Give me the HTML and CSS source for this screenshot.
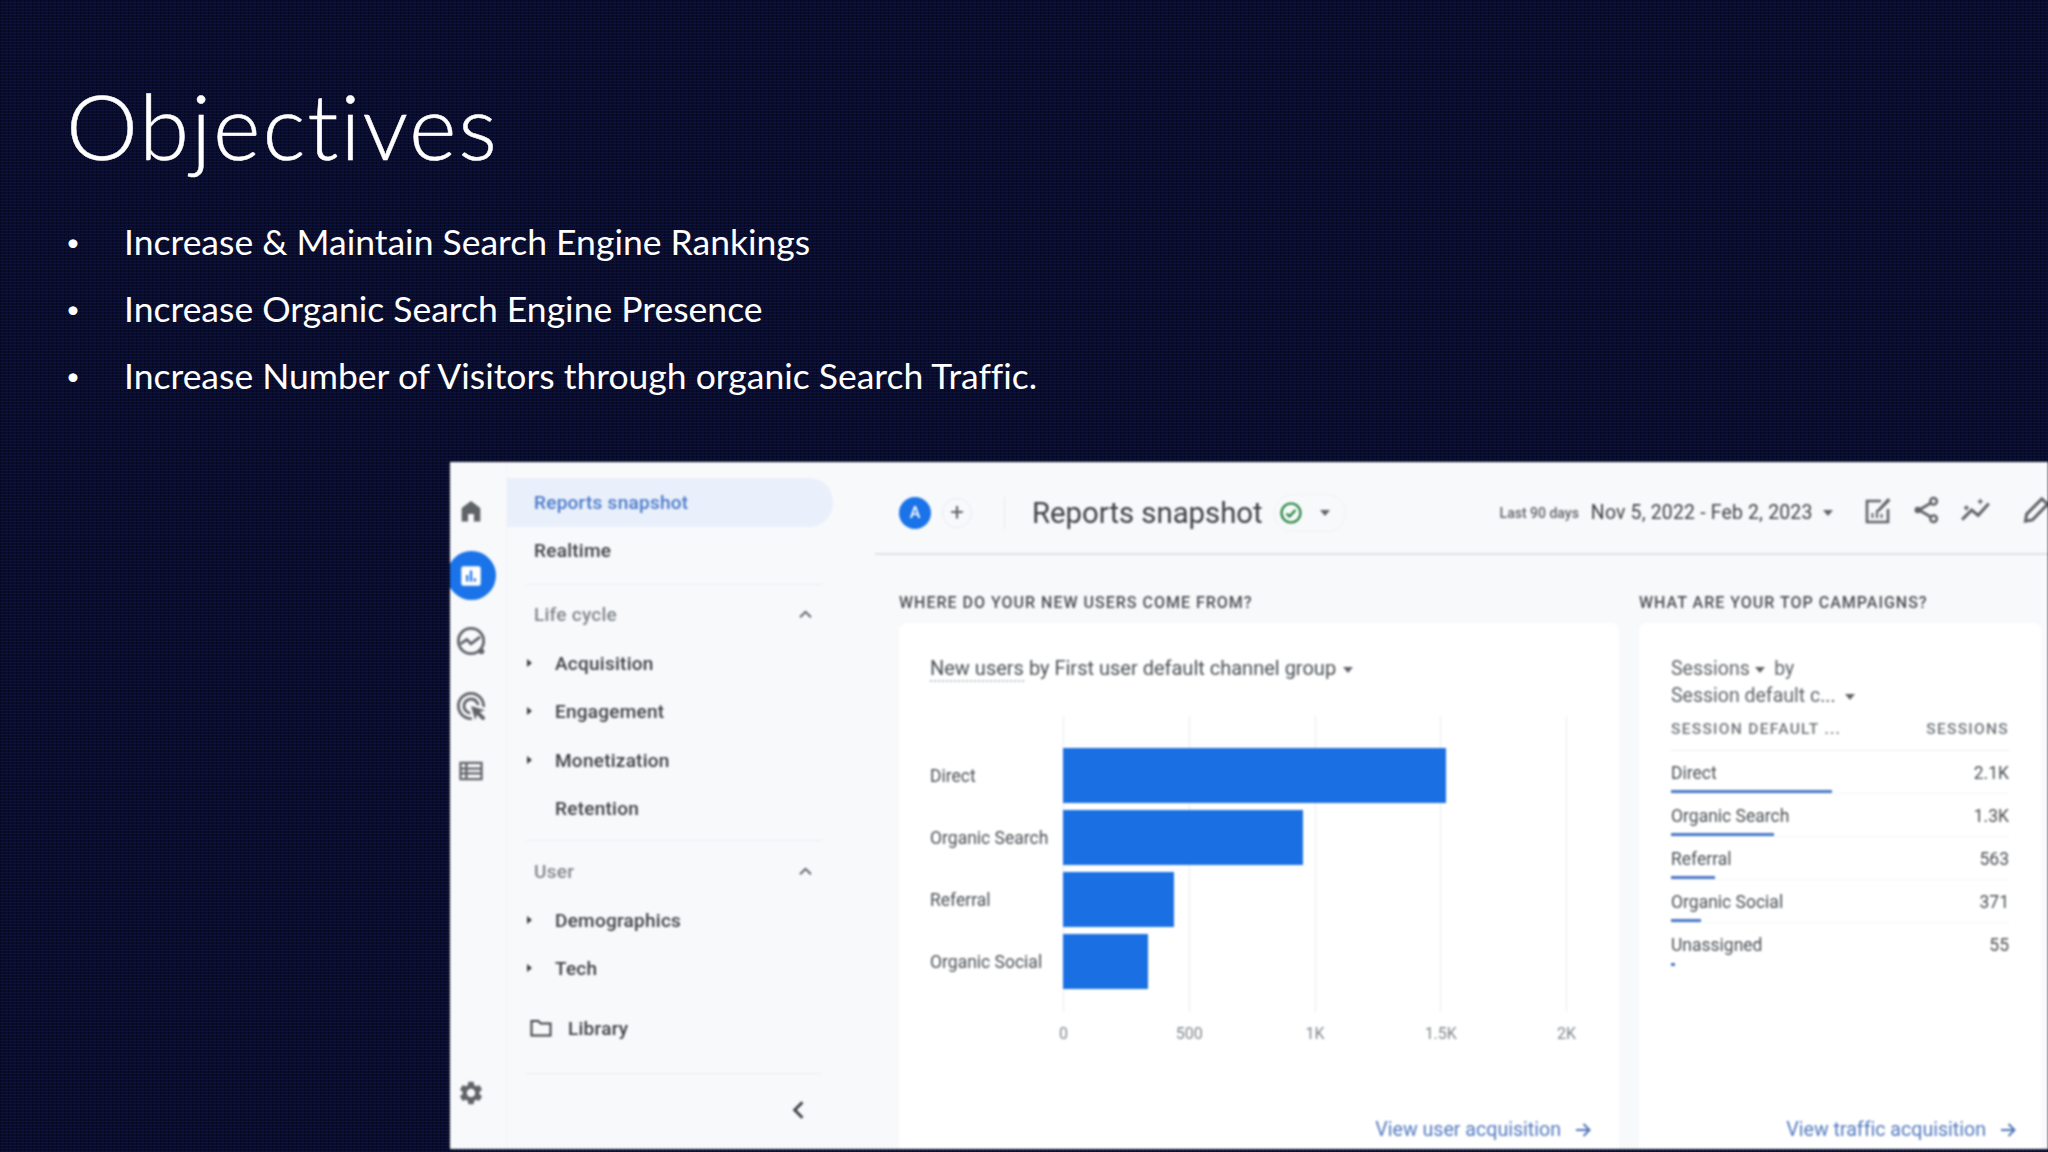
FILE: index.html
```html
<!DOCTYPE html>
<html lang="en">
<head>
  <meta charset="UTF-8">
  <title>Objectives</title>
  <link rel="stylesheet" href="styles.css">
</head>
<body>
<div class="slide">
  <h1 class="slide-title">Objectives</h1>
  <ul class="points">
    <li>Increase &amp; Maintain Search Engine Rankings</li>
    <li>Increase Organic Search Engine Presence</li>
    <li>Increase Number of Visitors through organic Search Traffic.</li>
  </ul>

  <div class="shot">
    <div class="rail">
      <svg class="rail-icon" viewBox="0 0 24 24"><path d="M4 21V10.500C4 9.800 4.300 9.200 4.900 8.800L12 3.500l7.100 5.300c.6.4.9 1 .9 1.700V21h-5.500v-6.500h-5V21z"/></svg>
      <div class="rail-active">
        <svg viewBox="0 0 24 24"><rect x="3" y="3" width="18" height="18" rx="2" fill="#fff"/><path d="M7.500 11h2v6h-2zM11 7h2v10h-2zM14.500 14h2v3h-2z" fill="#1a73e8"/></svg>
      </div>
      <svg class="rail-icon" viewBox="2 2 20 20"><circle cx="12" cy="12" r="9" fill="none" stroke="#5f6368" stroke-width="2"/><path d="M4.500 14l4.500-3 3 3 6.500-5" fill="none" stroke="#5f6368" stroke-width="2"/><circle cx="19.500" cy="19.500" r="2" fill="#5f6368"/></svg>
      <svg class="rail-icon" viewBox="2 2 20 20"><path d="M11.710 17.990C8.530 17.840 6 15.220 6 12c0-3.310 2.690-6 6-6 3.220 0 5.840 2.530 5.990 5.710l-2.100-.63C15.480 9.310 13.890 8 12 8c-2.210 0-4 1.790-4 4 0 1.890 1.310 3.480 3.080 3.890l.63 2.100zM22 12c0 .3-.01.6-.04.9l-1.970-.59c.01-.1.01-.21.01-.31 0-4.420-3.580-8-8-8s-8 3.580-8 8 3.580 8 8 8c.1 0 .21 0 .31-.01l.59 1.970c-.3.03-.6.04-.9.04-5.520 0-10-4.480-10-10S6.480 2 12 2s10 4.480 10 10zm-3.770 4.260L22 15l-10-3 3 10 1.260-3.770 4.270 4.270 1.980-1.980-4.280-4.260z"/></svg>
      <svg class="rail-icon" viewBox="0 0 24 24"><path d="M2 4h20v16H2zM4 6v3h3V6zm5 0v3h11V6zm-5 5v2h3v-2zm5 0v2h11v-2zm-5 4v3h3v-3zm5 0v3h11v-3z" fill-rule="evenodd"/></svg>
      <svg class="rail-icon rail-gear" viewBox="0 0 24 24"><path d="M19.140 12.940c.04-.3.06-.61.06-.94 0-.32-.02-.64-.07-.94l2.030-1.580c.18-.14.23-.41.12-.61l-1.920-3.320c-.12-.22-.37-.29-.59-.22l-2.390.96c-.5-.38-1.030-.7-1.620-.94l-.36-2.540c-.04-.24-.24-.41-.48-.41h-3.840c-.24 0-.43.17-.47.41l-.36 2.540c-.59.24-1.130.57-1.620.94l-2.390-.96c-.22-.08-.47 0-.59.22L2.740 8.870c-.12.21-.08.47.12.61l2.030 1.580c-.05.3-.09.63-.09.94s.02.64.07.94l-2.030 1.580c-.18.14-.23.41-.12.61l1.920 3.320c.12.22.37.29.59.22l2.390-.96c.5.38 1.030.7 1.620.94l.36 2.540c.05.24.24.41.48.41h3.840c.24 0 .44-.17.47-.41l.36-2.540c.59-.24 1.130-.56 1.620-.94l2.390.96c.22.08.47 0 .59-.22l1.920-3.320c.12-.22.07-.47-.12-.61l-2.010-1.580zM12 15.600c-1.980 0-3.600-1.620-3.600-3.600s1.620-3.600 3.600-3.600 3.600 1.620 3.600 3.600-1.620 3.600-3.600 3.600z"/></svg>
    </div>

    <nav class="nav">
      <div class="nav-row nav-current">Reports snapshot</div>
      <div class="nav-row">Realtime</div>
      <div class="nav-line nav-line-a"></div>
      <div class="nav-row nav-head">Life cycle
        <svg class="chev" viewBox="0 0 12 8"><path d="M1 6.500l5-5 5 5" fill="none" stroke="#5f6368" stroke-width="1.800"/></svg>
      </div>
      <div class="nav-row nav-sub"><i class="tri"></i>Acquisition</div>
      <div class="nav-row nav-sub"><i class="tri"></i>Engagement</div>
      <div class="nav-row nav-sub"><i class="tri"></i>Monetization</div>
      <div class="nav-row nav-sub">Retention</div>
      <div class="nav-line nav-line-b"></div>
      <div class="nav-row nav-head">User
        <svg class="chev" viewBox="0 0 12 8"><path d="M1 6.500l5-5 5 5" fill="none" stroke="#5f6368" stroke-width="1.800"/></svg>
      </div>
      <div class="nav-row nav-sub"><i class="tri"></i>Demographics</div>
      <div class="nav-row nav-sub"><i class="tri"></i>Tech</div>
      <div class="nav-row nav-lib">
        <svg class="folder" viewBox="0 0 22 18"><path d="M1.500 2h7l2 2.500h10v12h-19z" fill="none" stroke="#3c4043" stroke-width="2"/></svg>
        Library
      </div>
      <div class="nav-line nav-line-c"></div>
      <svg class="back" viewBox="0 0 12 18"><path d="M10 2L3 9l7 7" fill="none" stroke="#3c4043" stroke-width="2.600"/></svg>
    </nav>

    <div class="main">
      <header class="top">
        <span class="avatar">A</span>
        <span class="plus">+</span>
        <span class="top-sep"></span>
        <span class="top-title">Reports snapshot</span>
        <span class="status">
          <svg viewBox="0 0 24 24"><circle cx="12" cy="12" r="9.500" fill="none" stroke="#188038" stroke-width="2.200"/><path d="M7.500 12.500l3 3 6-6.500" fill="none" stroke="#188038" stroke-width="2.200"/></svg>
          <i class="caret"></i>
        </span>
        <span class="range-note">Last 90 days</span>
        <span class="range">Nov 5, 2022 - Feb 2, 2023</span>
        <i class="caret caret-range"></i>
        <svg class="tool tool-first" viewBox="0 0 28 28"><path d="M17 5H3v21h21V13" fill="none" stroke="#5f6368" stroke-width="2.600"/><path d="M8.500 22v-5M13 22v-8M17.500 22v-4" stroke="#5f6368" stroke-width="2"/><path d="M13 14L24 2l2.500 2.500L15 16z" fill="#5f6368"/></svg>
        <svg class="tool" viewBox="0 0 24 24"><path d="M18 5L6 12l12 7" fill="none" stroke="#5f6368" stroke-width="2.400"/><circle cx="18.500" cy="4.500" r="2.800" fill="#f8f9fb" stroke="#5f6368" stroke-width="2.200"/><circle cx="5" cy="12" r="2.800" fill="#5f6368"/><circle cx="18.500" cy="19.500" r="2.800" fill="#f8f9fb" stroke="#5f6368" stroke-width="2.200"/></svg>
        <svg class="tool tool-wide" viewBox="0 0 30 24"><path d="M2 21l9-9 6 5 10-11" fill="none" stroke="#5f6368" stroke-width="2.800"/><path d="M5 9l1-2 1 2 2 1-2 1-1 2-1-2-2-1zM18 3l1-2 1 2 2 1-2 1-1 2-1-2-2-1z" fill="#5f6368"/></svg>
        <svg class="tool tool-pen" viewBox="0 0 24 24"><path d="M3 21.500l1-6L17 2.500l5 4.500L9 20.500z" fill="none" stroke="#5f6368" stroke-width="2.600"/></svg>
      </header>

      <div class="cols">
        <section class="col col-a">
          <h2 class="col-title">WHERE DO YOUR NEW USERS COME FROM?</h2>
          <div class="card">
            <div class="card-title"><span class="dotted">New users</span> by First user default channel group <i class="caret"></i></div>
            <div class="chart">
              <div class="grid"><i></i><i></i><i></i><i></i><i></i></div>
              <div class="bar-row"><span>Direct</span><b class="bar" style="width:383px"></b></div>
              <div class="bar-row"><span>Organic Search</span><b class="bar" style="width:240px"></b></div>
              <div class="bar-row"><span>Referral</span><b class="bar" style="width:111px"></b></div>
              <div class="bar-row"><span>Organic Social</span><b class="bar" style="width:85px"></b></div>
            </div>
            <div class="axis"><span>0</span><span>500</span><span>1K</span><span>1.5K</span><span>2K</span></div>
            <a class="more">View user acquisition
              <svg viewBox="0 0 20 20"><path d="M3 10h13M10.500 4l6 6-6 6" fill="none" stroke="#4f74b8" stroke-width="2"/></svg>
            </a>
          </div>
        </section>

        <section class="col col-b">
          <h2 class="col-title">WHAT ARE YOUR TOP CAMPAIGNS?</h2>
          <div class="card card-side">
            <div class="side-title">Sessions <i class="caret"></i>&nbsp; by</div>
            <div class="side-title">Session default c... &nbsp;<i class="caret"></i></div>
            <div class="thead"><span>SESSION DEFAULT ...</span><span>SESSIONS</span></div>
            <div class="trow"><div class="tcell"><span>Direct</span><span>2.1K</span></div><b class="meter" style="width:161px"></b></div>
            <div class="trow"><div class="tcell"><span>Organic Search</span><span>1.3K</span></div><b class="meter" style="width:103px"></b></div>
            <div class="trow"><div class="tcell"><span>Referral</span><span>563</span></div><b class="meter" style="width:44px"></b></div>
            <div class="trow"><div class="tcell"><span>Organic Social</span><span>371</span></div><b class="meter" style="width:30px"></b></div>
            <div class="trow trow-last"><div class="tcell"><span>Unassigned</span><span>55</span></div><b class="meter" style="width:4px"></b></div>
            <a class="more">View traffic acquisition
              <svg viewBox="0 0 20 20"><path d="M3 10h13M10.500 4l6 6-6 6" fill="none" stroke="#4f74b8" stroke-width="2"/></svg>
            </a>
          </div>
        </section>
      </div>
    </div>
  </div>
</div>
</body>
</html>
```

FILE: styles.css
```css
* {
  margin: 0;
  padding: 0;
  box-sizing: border-box;
}

body {
  background: #050a2b;
  font-family: Roboto, "Liberation Sans", sans-serif;
}

.slide {
  width: 2048px;
  height: 1152px;
  overflow: hidden;
  display: flex;
  flex-direction: column;
  color: #fff;
  background-color: #080c2e;
  background-image:
    repeating-linear-gradient(0deg, rgba(34, 44, 110, .22) 0 1px, transparent 1px 3px),
    repeating-linear-gradient(90deg, rgba(0, 0, 12, .4) 0 1px, transparent 1px 4px);
  font-variant-ligatures: none;
}

.slide-title {
  font-family: Lato, "Open Sans", sans-serif;
  font-weight: 300;
  font-size: 91px;
  letter-spacing: 1.900px;
  -webkit-text-stroke: .5px #fff;
  line-height: 100px;
  padding: 75px 0 0 66px;
}

.points {
  list-style: none;
  font-family: Lato, "Open Sans", sans-serif;
  font-size: 35.500px;
  line-height: 67px;
  padding: 33px 0 0 66px;
}

.points li {
  display: flex;
}

.points li::before {
  content: "•";
  width: 58px;
  font-size: 24px;
}

/* the pasted analytics screenshot */
.shot {
  margin: auto 0 3px 450px;
  height: 687px;
  display: flex;
  color: #3c4043;
  background: #f8f9fb;
  overflow: hidden;
  filter: blur(.8px);
}

.rail {
  width: 57px;
  flex: none;
  display: flex;
  flex-direction: column;
  align-items: center;
  padding: 35px 14px 0 0;
  border-right: 1px solid #f1f3f4;
}

.rail-icon {
  width: 28px;
  height: 28px;
  flex: none;
  fill: #5f6368;
}

.rail-active {
  width: 49px;
  height: 49px;
  flex: none;
  margin: 26px 0 27px;
  border-radius: 50%;
  background: #1a73e8;
  display: flex;
  align-items: center;
  justify-content: center;
}

.rail-active svg {
  width: 26px;
  height: 26px;
}

.rail-icon + .rail-icon {
  margin-top: 37px;
}

.rail-active + .rail-icon {
  margin-top: 0;
}

.rail .rail-gear {
  margin-top: auto;
  margin-bottom: 42px;
}

.nav {
  width: 368px;
  flex: none;
  padding-top: 16px;
  font-size: 19px;
  letter-spacing: .25px;
  font-weight: 500;
}

.nav-row {
  height: 48.6px;
  width: 326px;
  padding-left: 27px;
  display: flex;
  align-items: center;
  position: relative;
}

.nav-current {
  color: #4a78c8;
  background: #e9f0fb;
  border-radius: 0 24px 24px 0;
}

.nav-head {
  color: #80868b;
}

.nav-sub {
  padding-left: 48px;
}

.nav-lib {
  margin-top: 11px;
  padding-left: 23px;
  color: #3c4043;
}

.nav-line {
  height: 1px;
  width: 296px;
  margin-left: 19px;
  background: #eceef1;
}

.nav-line-a {
  margin-top: 9px;
  margin-bottom: 5px;
}

.nav-line-b {
  margin-top: 7px;
  margin-bottom: 6px;
}

.nav-line-c {
  margin-top: 20px;
}

.chev {
  width: 13px;
  height: 9px;
  margin-left: auto;
  margin-right: 21px;
}

.tri {
  position: absolute;
  left: 20px;
  top: 20px;
  border-left: 5px solid #3c4043;
  border-top: 4px solid transparent;
  border-bottom: 4px solid transparent;
}

.folder {
  width: 22px;
  height: 18px;
  margin-right: 16px;
}

.back {
  display: block;
  width: 14px;
  height: 20px;
  margin: 26px 0 0 284px;
}

.main {
  flex: 1;
  min-width: 0;
  white-space: nowrap;
}

.top {
  height: 93px;
  display: flex;
  align-items: center;
  padding: 10px 0 0 24px;
  border-bottom: 2px solid #dfe1e5;
  margin-right: -30px;
}

.avatar {
  width: 32px;
  height: 32px;
  flex: none;
  border-radius: 50%;
  background: #1a73e8;
  color: #fff;
  font-size: 16px;
  font-weight: 500;
  display: flex;
  align-items: center;
  justify-content: center;
}

.plus {
  width: 30px;
  height: 30px;
  flex: none;
  margin-left: 11px;
  border: 1px solid #e8eaed;
  border-radius: 50%;
  color: #5f6368;
  font-size: 24px;
  line-height: 26px;
  text-align: center;
}

.top-sep {
  width: 1px;
  height: 32px;
  margin: 0 27px 0 32px;
  background: #e8eaed;
}

.top-title {
  font-size: 29.300px;
  color: #3c4043;
}

.status {
  width: 72px;
  height: 38px;
  flex: none;
  margin-left: 11px;
  border: 1px solid #eff1f3;
  border-radius: 19px;
  display: flex;
  align-items: center;
  padding-left: 4px;
}

.status svg {
  width: 24px;
  height: 24px;
  margin-right: 17px;
}

.caret {
  display: inline-block;
  border-top: 6px solid #5f6368;
  border-left: 5px solid transparent;
  border-right: 5px solid transparent;
  vertical-align: middle;
}

.range-note {
  margin-left: 154px;
  font-size: 14px;
  font-weight: 500;
  color: #5f6368;
}

.range {
  margin-left: 12px;
  font-size: 19.400px;
  color: #3c4043;
  letter-spacing: .2px;
}

.caret-range {
  margin-left: 10px;
}

.tool {
  width: 28px;
  height: 28px;
  flex: none;
  margin-left: 20px;
  position: relative;
  top: -3px;
}

.tool-first {
  margin-left: 31px;
}

.tool-wide {
  width: 32px;
}

.tool-pen {
  margin-left: 30px;
}

.cols {
  display: flex;
  gap: 20px;
  padding-left: 24px;
}

.col-title {
  font-size: 16px;
  font-weight: 500;
  letter-spacing: 1px;
  color: #4a4f54;
  height: 68px;
  line-height: 20px;
  padding-top: 38px;
}

.col-a {
  width: 720px;
  flex: none;
}

.col-b {
  width: 402px;
  flex: none;
}

.card {
  height: 526px;
  background: #fff;
  border-radius: 8px 8px 0 0;
  padding: 33px 0 0 31px;
  position: relative;
}

.card-title {
  font-size: 20px;
  line-height: 24px;
  color: #4a4f54;
}

.card-title .caret {
  margin-left: 2px;
}

.dotted {
  position: relative;
}

.dotted::after {
  content: "";
  position: absolute;
  left: 0;
  right: 0;
  bottom: -2px;
  border-bottom: 2px dotted #b8bcc1;
}

.chart {
  position: relative;
  margin-top: 36px;
  height: 296px;
  padding-top: 32px;
}

.grid {
  position: absolute;
  left: 133px;
  top: 0;
  bottom: 0;
  width: 504px;
  display: flex;
  justify-content: space-between;
}

.grid i {
  width: 1px;
  background: #e8eaed;
}

.bar-row {
  position: relative;
  height: 55px;
  margin-bottom: 7px;
  display: flex;
  align-items: center;
  font-size: 17.500px;
  color: #4a4f54;
}

.bar-row span {
  width: 133px;
  flex: none;
}

.bar {
  height: 100%;
  background: #1a6fe3;
}

.axis {
  margin: 12px 0 0 133px;
  width: 504px;
  display: flex;
  justify-content: space-between;
  font-size: 16px;
  color: #80868b;
}

.axis span {
  width: 1px;
  display: flex;
  justify-content: center;
}

.more {
  position: absolute;
  right: 26px;
  bottom: 8px;
  font-size: 19.600px;
  color: #5279bf;
  display: flex;
  align-items: center;
  gap: 12px;
}

.more svg {
  width: 20px;
  height: 20px;
}

.card-side {
  padding: 32px 32px 0 32px;
}

.card-side .more {
  right: 23px;
}

.side-title {
  font-size: 19.500px;
  line-height: 27px;
  color: #5f6368;
}

.thead {
  display: flex;
  justify-content: space-between;
  font-size: 15.500px;
  font-weight: 500;
  letter-spacing: 1.300px;
  color: #70757a;
  height: 42px;
  padding-top: 11px;
  border-bottom: 1px solid #eceef1;
}

.trow {
  height: 43px;
  border-bottom: 1px solid #f4f5f6;
  position: relative;
  padding-top: 12px;
}

.trow-last {
  border-bottom: 0;
}

.tcell {
  display: flex;
  justify-content: space-between;
  font-size: 17.500px;
  color: #4a4f54;
}

.meter {
  position: absolute;
  left: 0;
  bottom: 0;
  height: 3px;
  background: #4a78c8;
}
```
